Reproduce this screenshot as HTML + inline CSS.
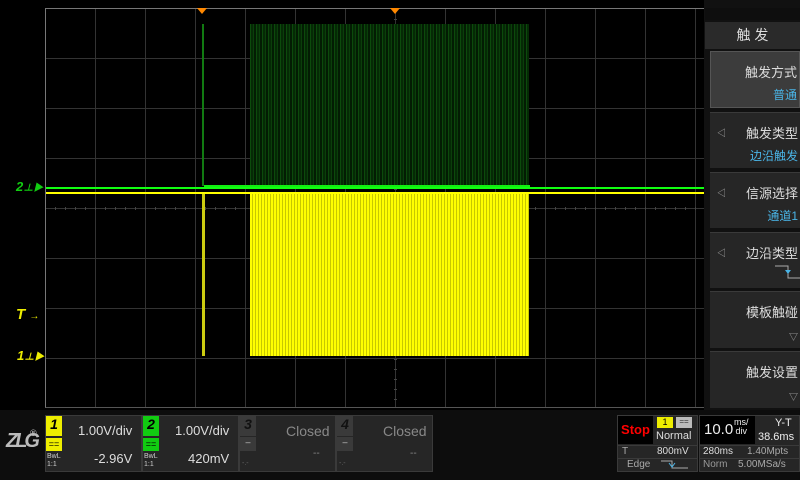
<!DOCTYPE html><html><head><meta charset="utf-8"><style>
body{margin:0;width:800px;height:480px;background:#000;overflow:hidden;position:relative;font-family:"Liberation Sans","Noto Sans CJK SC",sans-serif}
.a{position:absolute}
.cb{background:#262626;border:1px solid #3a3a3a;box-sizing:border-box}
.mi{position:absolute;left:710px;width:90px;background:#262626;border-top:1px solid #3a3a3a;box-sizing:border-box;color:#ddd;font-size:13px}
.mi .t{position:absolute;right:2px;top:10px}
.mi .v{position:absolute;right:2px;top:34px;color:#4ab4e6;font-size:12px}
.mi .l{position:absolute;left:7px;top:13px;font-size:9px;color:#aaa}
</style></head><body>
<div class="a" style="left:45px;top:8px;width:660px;height:400px;border-left:1px solid #777;border-top:1px solid #777;border-bottom:1px solid #555;box-sizing:border-box;background-image:repeating-linear-gradient(90deg,transparent 0 49px,#333 49px 50px),repeating-linear-gradient(180deg,transparent 0 49px,#333 49px 50px)"></div>
<div class="a" style="left:46px;top:207px;width:655px;height:3px;background:repeating-linear-gradient(90deg,transparent 0 9px,#444 9px 10px)"></div>
<div class="a" style="left:394px;top:10px;width:3px;height:398px;background:repeating-linear-gradient(180deg,transparent 0 9px,#444 9px 10px)"></div>
<div class="a" style="left:197px;top:8px;width:0;height:0;border-left:5px solid transparent;border-right:5px solid transparent;border-top:6px solid #f80"></div>
<div class="a" style="left:390px;top:8px;width:0;height:0;border-left:5px solid transparent;border-right:5px solid transparent;border-top:6px solid #f80"></div>
<div class="a" style="left:250px;top:24px;width:279px;height:162px;background:repeating-linear-gradient(90deg,#0c4a0c 0 1px,#052a05 1px 3px,#0a3f0a 3px 4px,#031c03 4px 6px);"></div>
<div class="a" style="left:202px;top:24px;width:2px;height:162px;background:#117a11"></div>
<div class="a" style="left:250px;top:193px;width:279px;height:163px;background:repeating-linear-gradient(90deg,#ffff00 0 2px,#c8c800 2px 3px)"></div>
<div class="a" style="left:202px;top:193px;width:3px;height:163px;background:#cccc10"></div>
<div class="a" style="left:46px;top:187px;width:658px;height:2px;background:#1f1"></div>
<div class="a" style="left:204px;top:185px;width:326px;height:2px;background:#1e1"></div>
<div class="a" style="left:46px;top:192px;width:658px;height:2px;background:#ff0"></div>
<div class="a" style="left:16px;top:179px;color:#1c1;font-size:13px;font-style:italic;font-weight:bold">2<span style="font-size:10px">⊥▶</span></div>
<div class="a" style="left:16px;top:306px;color:#ee0;font-size:15px;font-style:italic;font-weight:bold">T <span style="font-size:10px;font-style:normal">→</span></div>
<div class="a" style="left:17px;top:348px;color:#ee0;font-size:13px;font-style:italic;font-weight:bold">1<span style="font-size:10px">⊥▶</span></div>
<div class="a" style="left:704px;top:0;width:96px;height:412px;background:#111"></div>
<div class="a" style="left:705px;top:8px;width:95px;height:12px;background:#0e0e0e"></div>
<div class="a" style="left:705px;top:22px;width:95px;height:27px;background:#2a2a2a;color:#ddd;font-size:14px;text-align:center;line-height:27px">触 发</div>
<div class="mi" style="top:51px;height:57px;background:#3c3c3c;border:1px solid #555"><span class="t">触发方式</span><span class="v">普通</span></div>
<div class="mi" style="top:112px;height:56px"><span class="l">◁</span><span class="t">触发类型</span><span class="v">边沿触发</span></div>
<div class="mi" style="top:172px;height:56px"><span class="l">◁</span><span class="t">信源选择</span><span class="v">通道1</span></div>
<div class="mi" style="top:232px;height:56px"><span class="l">◁</span><span class="t">边沿类型</span>
<svg class="a" style="left:64px;top:32px" width="32" height="16"><path d="M1 1H14V13H30" stroke="#aaa" fill="none"/><path d="M11 5H17L14 9Z" fill="#4ab4e6"/></svg></div>
<div class="mi" style="top:291px;height:57px"><span class="t">模板触碰</span><span class="v" style="color:#aaa;font-size:9px;top:38px">▽</span></div>
<div class="mi" style="top:351px;height:57px"><span class="t">触发设置</span><span class="v" style="color:#aaa;font-size:9px;top:38px">▽</span></div>
<div class="a" style="left:0;top:410px;width:800px;height:70px;background:#0d0d0d"></div>
<div class="a" style="left:6px;top:430px;color:#bbb;font-size:20px;font-style:italic;font-weight:bold;letter-spacing:-3px">ZLG</div>
<div class="a" style="left:30px;top:428px;color:#bbb;font-size:9px">®</div>
<div class="a cb" style="left:45px;top:415px;width:97px;height:57px"></div>
<div class="a" style="left:46px;top:416px;width:16px;height:20px;background:#ee0;color:#000;font-weight:bold;font-style:italic;text-align:center;font-size:14px">1</div>
<div class="a" style="left:46px;top:438px;width:16px;height:13px;background:#ee0;color:#000;font-size:9px;text-align:center;line-height:12px">==</div>
<div class="a" style="left:47px;top:453px;color:#ccc;font-size:7px;line-height:8px">BwL<br>1:1</div>
<div class="a" style="left:78px;top:423px;color:#ddd;font-size:13px">1.00V/div</div>
<div class="a" style="left:94px;top:451px;color:#ddd;font-size:13px">-2.96V</div>
<div class="a cb" style="left:142px;top:415px;width:97px;height:57px"></div>
<div class="a" style="left:143px;top:416px;width:16px;height:20px;background:#1c1;color:#000;font-weight:bold;font-style:italic;text-align:center;font-size:14px">2</div>
<div class="a" style="left:143px;top:438px;width:16px;height:13px;background:#1c1;color:#000;font-size:9px;text-align:center;line-height:12px">==</div>
<div class="a" style="left:144px;top:453px;color:#ccc;font-size:7px;line-height:8px">BwL<br>1:1</div>
<div class="a" style="left:175px;top:423px;color:#ddd;font-size:13px">1.00V/div</div>
<div class="a" style="left:188px;top:451px;color:#ddd;font-size:13px">420mV</div>
<div class="a cb" style="left:239px;top:415px;width:97px;height:57px"></div>
<div class="a" style="left:240px;top:416px;width:16px;height:20px;background:#3a3a3a;color:#111;font-weight:bold;font-style:italic;text-align:center;font-size:14px">3</div>
<div class="a" style="left:240px;top:437px;width:16px;height:14px;background:#3a3a3a;color:#ccc;font-size:9px;text-align:center">–</div>
<div class="a" style="left:286px;top:423px;color:#888;font-size:14px">Closed</div>
<div class="a" style="left:313px;top:448px;color:#888;font-size:10px">--</div>
<div class="a" style="left:242px;top:460px;color:#666;font-size:7px">-.-</div>
<div class="a cb" style="left:336px;top:415px;width:97px;height:57px"></div>
<div class="a" style="left:337px;top:416px;width:16px;height:20px;background:#3a3a3a;color:#111;font-weight:bold;font-style:italic;text-align:center;font-size:14px">4</div>
<div class="a" style="left:337px;top:437px;width:16px;height:14px;background:#3a3a3a;color:#ccc;font-size:9px;text-align:center">–</div>
<div class="a" style="left:383px;top:423px;color:#888;font-size:14px">Closed</div>
<div class="a" style="left:410px;top:448px;color:#888;font-size:10px">--</div>
<div class="a" style="left:339px;top:460px;color:#666;font-size:7px">-.-</div>
<div class="a cb" style="left:617px;top:415px;width:81px;height:57px"></div>
<div class="a" style="left:618px;top:416px;width:35px;height:28px;background:#000;color:#f00;font-weight:bold;font-size:13px;line-height:28px;text-align:center">Stop</div>
<div class="a" style="left:657px;top:417px;width:16px;height:11px;background:#ee0;color:#000;font-size:9px;text-align:center;line-height:11px">1</div>
<div class="a" style="left:676px;top:417px;width:16px;height:11px;background:#bbb;color:#333;font-size:8px;text-align:center;line-height:10px">==</div>
<div class="a" style="left:656px;top:430px;color:#ddd;font-size:11px">Normal</div>
<div class="a" style="left:618px;top:445px;width:79px;height:1px;background:#3a3a3a"></div>
<div class="a" style="left:622px;top:446px;color:#aaa;font-size:10px">T</div>
<div class="a" style="left:657px;top:446px;color:#ddd;font-size:10px">800mV</div>
<div class="a" style="left:618px;top:458px;width:79px;height:1px;background:#3a3a3a"></div>
<div class="a" style="left:627px;top:459px;color:#aaa;font-size:10px">Edge</div>
<svg class="a" style="left:660px;top:460px" width="30" height="10"><path d="M1 1H12V8H28" stroke="#aaa" fill="none"/><path d="M9 3L12 7L15 3" stroke="#4ab4e6" fill="none"/></svg>
<div class="a cb" style="left:699px;top:415px;width:101px;height:57px"></div>
<div class="a" style="left:700px;top:416px;width:55px;height:28px;background:#000;color:#eee;font-size:15px;line-height:28px;padding-left:4px;box-sizing:border-box">10.0<span class="a" style="left:34px;top:2px;font-size:9px;line-height:9px;text-align:center">ms/<br>div</span></div>
<div class="a" style="left:775px;top:417px;color:#eee;font-size:11px">Y-T</div>
<div class="a" style="left:758px;top:431px;color:#eee;font-size:11px">38.6ms</div>
<div class="a" style="left:700px;top:445px;width:99px;height:1px;background:#3a3a3a"></div>
<div class="a" style="left:703px;top:446px;color:#ddd;font-size:10px">280ms</div>
<div class="a" style="left:747px;top:446px;color:#aaa;font-size:10px">1.40Mpts</div>
<div class="a" style="left:700px;top:458px;width:99px;height:1px;background:#3a3a3a"></div>
<div class="a" style="left:703px;top:459px;color:#999;font-size:10px">Norm</div>
<div class="a" style="left:738px;top:459px;color:#aaa;font-size:10px">5.00MSa/s</div>
</body></html>
